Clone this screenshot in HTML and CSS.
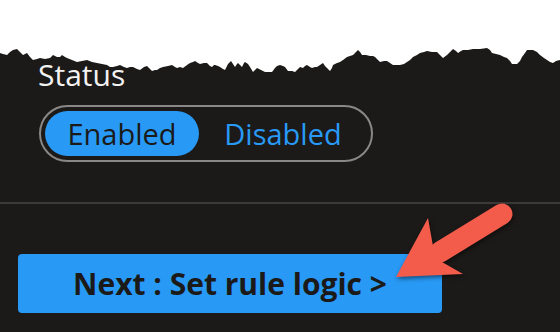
FILE: index.html
```html
<!DOCTYPE html>
<html lang="en">
<head>
    <meta charset="UTF-8">
    <meta name="viewport" content="width=device-width, initial-scale=1.0">
    <title>Rule status</title>
    <link rel="stylesheet" href="styles.css">
</head>
<body>
    <!-- torn edge of the cropped screenshot -->
    <svg class="tear" viewBox="0 0 560 80" width="560" height="80">
        <polygon fill="#ffffff" points="0,53 3,54 7,55 10,52 13,50 17,49 20,52 23,55 27,53 30,57 33,60 37,59 40,58 45,59 50,58 53,55 57,57 60,57 62,55 65,57 67,58 72,60 77,62 82,61 87,60 92,62 97,63 102,64 107,65 110,67 113,67 117,66 120,65 124,67 127,68 130,67 133,67 137,69 140,70 144,67 147,66 150,69 152,71 155,70 157,70 160,68 163,67 168,66 172,65 175,67 177,68 180,67 183,68 187,65 190,63 193,62 195,61 198,63 200,64 204,63 207,63 210,66 212,67 214,65 215,65 218,66 220,67 223,69 225,70 228,64 231,61 233,64 235,67 237,64 238,63 240,65 242,67 244,63 245,62 248,64 250,67 253,72 255,70 257,68 261,70 265,72 268,72 272,72 275,68 277,66 280,65 283,66 285,67 288,71 292,71 295,72 298,69 300,67 303,68 305,66 307,65 310,67 312,68 315,67 317,67 320,65 323,63 325,66 327,68 330,71 332,68 333,65 337,63 340,62 343,60 347,57 350,56 353,55 356,52 358,50 360,52 362,55 366,55 370,56 373,56 375,57 378,60 380,62 384,61 387,61 390,63 393,65 397,65 400,65 404,64 407,62 410,60 413,57 417,55 420,53 424,52 427,51 432,52 437,52 440,55 443,58 447,55 450,52 453,49 456,51 458,53 461,51 463,50 468,50 473,49 480,49 487,48 490,50 492,53 496,54 500,55 504,57 507,58 510,61 512,64 515,64 517,64 520,61 522,57 525,53 527,50 530,50 533,50 537,52 540,55 544,58 547,60 550,62 553,63 556,61 560,60 560,0 0,0"/>
    </svg>

    <div class="field">
        <div class="field-label">Status</div>
        <div class="toggle">
            <button class="toggle-option active">Enabled</button>
            <button class="toggle-option">Disabled</button>
        </div>
    </div>

    <hr class="divider">

    <div class="footer">
        <button class="primary">Next : Set rule logic &gt;</button>
    </div>

    <!-- callout arrow -->
    <svg class="callout" viewBox="0 0 560 332" width="560" height="332">
        <line x1="502" y1="214" x2="440" y2="252" stroke="#f35b4b" stroke-width="21" stroke-linecap="round"/>
        <polygon fill="#f35b4b" points="396,277 428,218 433,246 442,262 463,274"/>
    </svg>
</body>
</html>
```

FILE: styles.css
```css
* {
    margin: 0;
    padding: 0;
    box-sizing: border-box;
}

body {
    font-family: "Open Sans", "Noto Sans", sans-serif;
    background-color: #1b1a19;
    color: #f3f2f1;
    width: 560px;
    height: 332px;
    overflow: hidden;
    position: relative;
}

.tear {
    position: absolute;
    top: 0;
    left: 0;
}

.callout {
    position: absolute;
    top: 0;
    left: 0;
    filter: drop-shadow(1px 2px 2px rgba(0,0,0,0.5));
}

.field {
    padding: 60px 0 0 38px;
}

.field-label {
    font-size: 30px;
    line-height: 30px;
    margin-bottom: 15px;
}

.toggle {
    display: inline-flex;
    margin-left: 1px;
    padding: 4px;
    border: 2px solid #8a8886;
    border-radius: 30px;
}

.toggle-option {
    font-family: inherit;
    font-size: 29px;
    height: 45px;
    line-height: 45px;
    width: 168px;
    background: none;
    border: none;
    border-radius: 23px;
    color: #2899f5;
    text-align: center;
}

.toggle-option.active {
    width: 154px;
    background-color: #2899f5;
    color: #1b1a19;
}

.divider {
    border: none;
    height: 2px;
    background-color: #3b3a39;
    margin-top: 40px;
}

.footer {
    padding: 50px 0 0 18px;
}

.primary {
    font-family: inherit;
    font-size: 30px;
    font-weight: 700;
    width: 424px;
    height: 59px;
    background-color: #2899f5;
    color: #1b1a19;
    border: none;
    border-radius: 4px;
}
```
